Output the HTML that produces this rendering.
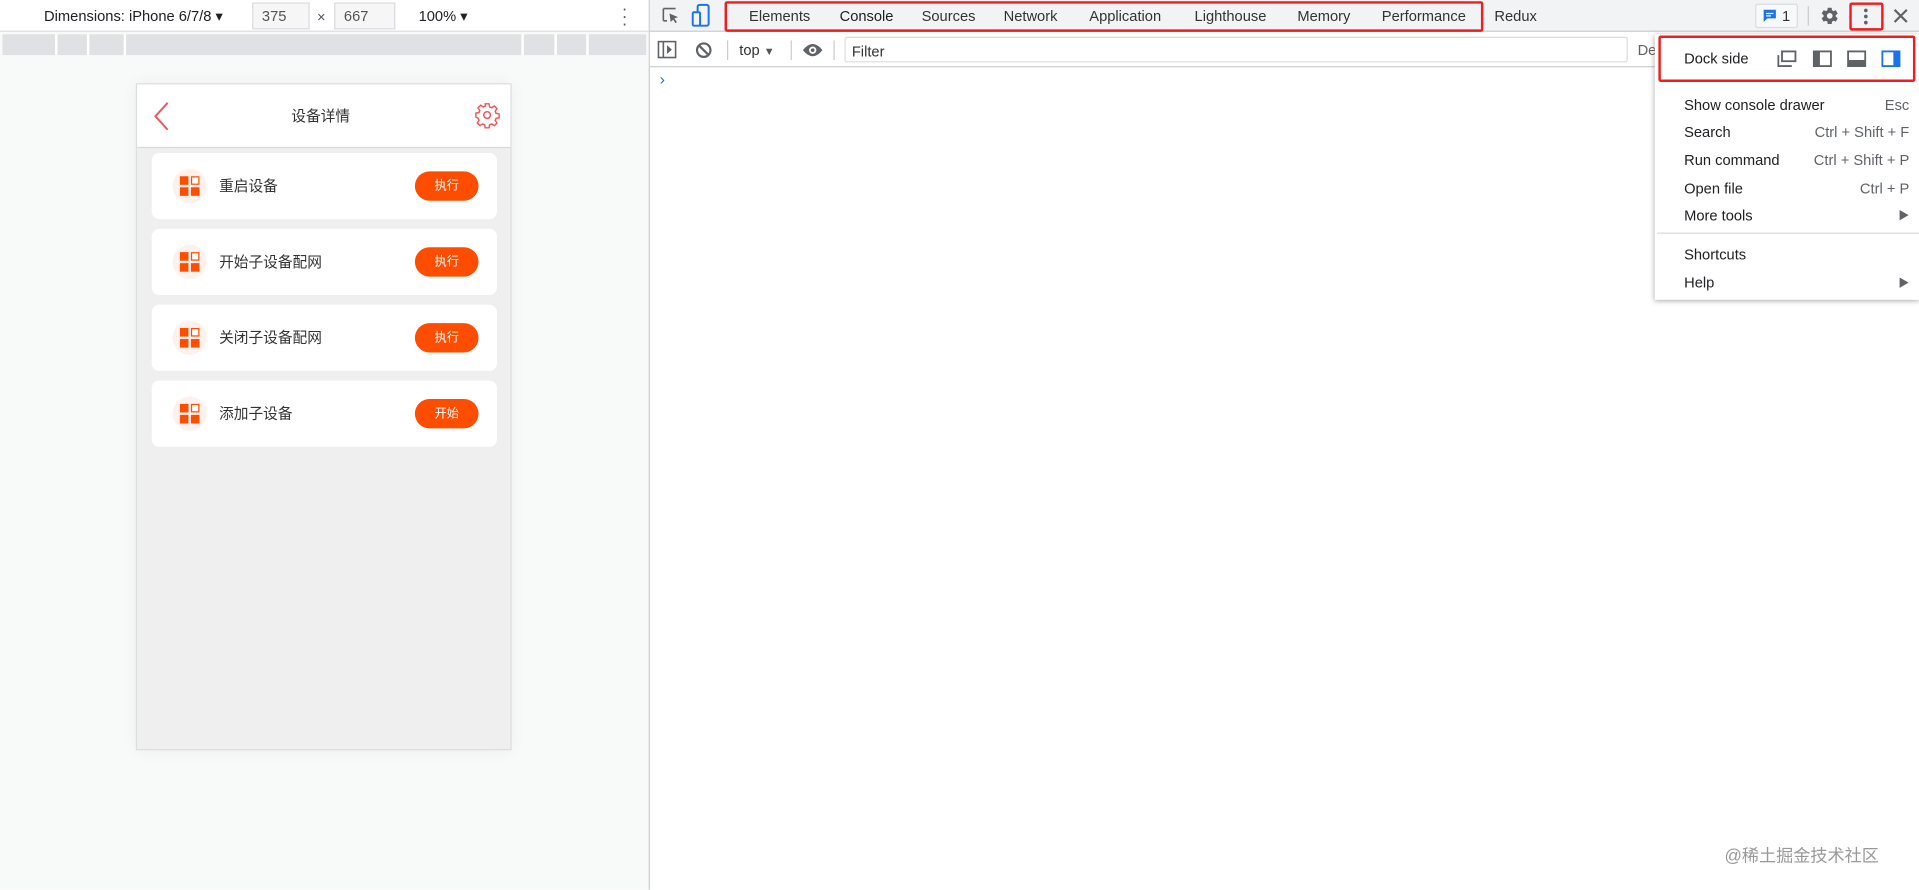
<!DOCTYPE html>
<html><head><meta charset="utf-8"><style>
*{box-sizing:border-box;margin:0;padding:0}
html,body{width:1919px;height:890px;overflow:hidden;background:#fff}
#s{position:absolute;left:0;top:0;width:1568px;height:727px;transform:scale(1.2239);transform-origin:0 0;font-family:"Liberation Sans","Noto Sans CJK SC",sans-serif;font-size:12px;color:#303942}
.a{position:absolute}
.left{left:0;top:0;width:530px;height:727px;background:#f8f9f9}
.card{position:absolute;left:12px;width:282px;height:54px;background:#fff;border-radius:6px}
.ic{position:absolute;left:17px;top:13px;width:28px;height:28px;border-radius:50%;background:#fdf1ee}
.ic i{position:absolute;width:7px;height:7px;background:#ff4d00}
.lbl{position:absolute;left:55px;top:18px;font-size:12px;color:#333}
.btn{position:absolute;left:215px;top:15px;width:52px;height:24px;border-radius:12px;background:#ff4d00;color:#fff;font-size:10px;text-align:center;line-height:25px}
.tab{position:absolute;top:6px;font-size:12px;color:#333}
.mi{position:absolute;left:24px;font-size:12px;color:#202124}
.sc{position:absolute;right:8px;font-size:12px;color:#5f6368}
</style></head><body><div id="s">
<div class="a left">
 <div class="a" style="left:0;top:0;width:530px;height:26px;background:#fff;border-bottom:1px solid #dadce0"></div>
 <div class="a" style="left:36px;top:6px;font-size:12px;color:#202124">Dimensions: iPhone 6/7/8 ▾</div>
 <div class="a" style="left:206px;top:2px;width:47px;height:22px;border:1px solid #dadce0;background:#f6f6f6;color:#555;padding:3px 0 0 7px">375</div>
 <div class="a" style="left:259px;top:7px;color:#555">×</div>
 <div class="a" style="left:273px;top:2px;width:50px;height:22px;border:1px solid #dadce0;background:#f6f6f6;color:#555;padding:3px 0 0 7px">667</div>
 <div class="a" style="left:342px;top:6px;font-size:12px;color:#202124">100% ▾</div>
 <div class="a" style="left:508px;top:4px;color:#555;font-size:14px;line-height:6px;text-align:center">·<br>·<br>·</div>
 <div class="a" style="left:2px;top:28px;width:526px;height:17px;background:#dfe1e5"></div>
 <div class="a" style="left:45px;top:28px;width:2px;height:17px;background:#fff"></div>
 <div class="a" style="left:71px;top:28px;width:2px;height:17px;background:#fff"></div>
 <div class="a" style="left:101px;top:28px;width:2px;height:17px;background:#fff"></div>
 <div class="a" style="left:426px;top:28px;width:2px;height:17px;background:#fff"></div>
 <div class="a" style="left:453px;top:28px;width:2px;height:17px;background:#fff"></div>
 <div class="a" style="left:479px;top:28px;width:2px;height:17px;background:#fff"></div>
 <div class="a" style="left:111px;top:68px;width:307px;height:545px;background:#efefef;border:1px solid #ddd;box-shadow:0 0 12px rgba(0,0,0,.05)">
  <div class="a" style="left:0;top:0;width:305px;height:52px;background:#fff;border-bottom:1px solid #d8d8d8"></div>
  <svg class="a" style="left:12px;top:13px" width="16" height="26"><path d="M13 2 L3 13 L13 24" stroke="#f25555" stroke-width="1.6" fill="none"/></svg>
  <div class="a" style="left:126px;top:17px;font-size:12px;color:#333">设备详情</div>
  <svg class="a" style="left:275px;top:14px" width="22" height="22" viewBox="0 0 24 24"><path d="M10.3 2h3.4l.5 2.7 1.9.8 2.3-1.6 2.4 2.4-1.6 2.3.8 1.9 2.7.5v3.4l-2.7.5-.8 1.9 1.6 2.3-2.4 2.4-2.3-1.6-1.9.8-.5 2.7h-3.4l-.5-2.7-1.9-.8-2.3 1.6-2.4-2.4 1.6-2.3-.8-1.9L2 13.7v-3.4l2.7-.5.8-1.9-1.6-2.3 2.4-2.4 2.3 1.6 1.9-.8z" fill="none" stroke="#f25555" stroke-width="1.3"/><circle cx="12" cy="12" r="3" fill="none" stroke="#f25555" stroke-width="1.3"/></svg>
  <div class="card" style="top:56px"><div class="ic"><i style="left:6px;top:6px"></i><i style="left:15px;top:6px;background:#fff;border:1.5px solid #ff4d00"></i><i style="left:6px;top:15px"></i><i style="left:15px;top:15px"></i></div><div class="lbl">重启设备</div><div class="btn">执行</div></div>
  <div class="card" style="top:118px"><div class="ic"><i style="left:6px;top:6px"></i><i style="left:15px;top:6px;background:#fff;border:1.5px solid #ff4d00"></i><i style="left:6px;top:15px"></i><i style="left:15px;top:15px"></i></div><div class="lbl">开始子设备配网</div><div class="btn">执行</div></div>
  <div class="card" style="top:180px"><div class="ic"><i style="left:6px;top:6px"></i><i style="left:15px;top:6px;background:#fff;border:1.5px solid #ff4d00"></i><i style="left:6px;top:15px"></i><i style="left:15px;top:15px"></i></div><div class="lbl">关闭子设备配网</div><div class="btn">执行</div></div>
  <div class="card" style="top:242px"><div class="ic"><i style="left:6px;top:6px"></i><i style="left:15px;top:6px;background:#fff;border:1.5px solid #ff4d00"></i><i style="left:6px;top:15px"></i><i style="left:15px;top:15px"></i></div><div class="lbl">添加子设备</div><div class="btn">开始</div></div>
 </div>
</div>
<div class="a" style="left:530px;top:0;width:1px;height:727px;background:#cbcdd1"></div>
<div class="a" style="left:531px;top:0;width:1037px;height:26px;background:#f1f3f4;border-bottom:1px solid #cbcdd1"></div>
<svg class="a" style="left:540px;top:5px" width="16" height="16"><path d="M2 2h10M2 2v10M2 12h3" stroke="#5f6368" stroke-width="1.3" fill="none"/><path d="M7 6l7 3-3 1 2 3-1 1-2-3-2 2z" fill="#5f6368"/></svg>
<svg class="a" style="left:565px;top:3px" width="16" height="20"><rect x="5" y="1" width="9" height="17" rx="1.5" stroke="#1a73e8" stroke-width="1.6" fill="none"/><rect x="1" y="7" width="6" height="11" rx="1" stroke="#1a73e8" stroke-width="1.6" fill="#f1f3f4"/></svg>
<div class="a" style="left:592px;top:1px;width:620px;height:25px;border:2px solid #f21c1c;border-radius:2px"></div>
<div class="tab" style="left:612px">Elements</div>
<div class="tab" style="left:686px;color:#202124">Console</div>
<div class="tab" style="left:753px">Sources</div>
<div class="tab" style="left:820px">Network</div>
<div class="tab" style="left:890px">Application</div>
<div class="tab" style="left:976px">Lighthouse</div>
<div class="tab" style="left:1060px">Memory</div>
<div class="tab" style="left:1129px">Performance</div>
<div class="tab" style="left:1221px">Redux</div>
<div class="a" style="left:1434px;top:3px;width:35px;height:20px;border:1px solid #dadce0;border-radius:2px;background:#f8f9fa"></div>
<svg class="a" style="left:1440px;top:7px" width="12" height="12"><path d="M1 1h10v7H4l-3 3z" fill="#1a73e8"/><path d="M3 4h6M3 6h4" stroke="#fff"/></svg>
<div class="a" style="left:1456px;top:6px;color:#333;font-size:12px">1</div>
<div class="a" style="left:1477px;top:5px;width:1px;height:16px;background:#ccc"></div>
<svg class="a" style="left:1487px;top:5px" width="16" height="16" viewBox="0 0 24 24"><path d="M19.4 13c.04-.3.06-.65.06-1s-.02-.7-.06-1l2.1-1.6c.2-.15.24-.42.12-.64l-2-3.46c-.12-.22-.4-.3-.6-.22l-2.5 1c-.52-.4-1.08-.73-1.700-.98L14.4 2.4A.5.5 0 0 0 14 2h-4a.5.5 0 0 0-.5.42L9.1 5.1c-.6.25-1.17.6-1.7.98l-2.5-1a.5.5 0 0 0-.6.22l-2 3.46c-.13.22-.07.49.12.64L4.5 11c-.04.3-.07.66-.07 1s.03.7.07 1l-2.1 1.6a.5.5 0 0 0-.12.64l2 3.46c.12.22.4.3.6.22l2.5-1c.52.4 1.08.73 1.7.98l.38 2.66c.04.24.25.42.5.42h4c.25 0 .46-.18.5-.42l.37-2.660c.6-.25 1.17-.58 1.7-.98l2.5 1c.22.08.48 0 .6-.22l2-3.46c.12-.22.07-.49-.12-.64zM12 15.5A3.5 3.5 0 1 1 12 8.5a3.5 3.5 0 0 1 0 7z" fill="#5f6368"/></svg>
<div class="a" style="left:1511px;top:2px;width:28px;height:23px;border:2px solid #f21c1c;border-radius:2px"></div>
<div class="a" style="left:1523px;top:7px;width:3px;height:3px;border-radius:50%;background:#5f6368;box-shadow:0 5px 0 #5f6368,0 10px 0 #5f6368"></div>
<svg class="a" style="left:1547px;top:7px" width="12" height="12"><path d="M1 1l10 10M11 1L1 11" stroke="#5f6368" stroke-width="1.8"/></svg>
<div class="a" style="left:531px;top:27px;width:1037px;height:28px;background:#fff;border-bottom:1px solid #cbcdd1"></div>
<svg class="a" style="left:537px;top:33px" width="16" height="15"><rect x="1" y="1" width="14" height="13" stroke="#5f6368" stroke-width="1.3" fill="none"/><path d="M5 1v13" stroke="#5f6368" stroke-width="1.3"/><path d="M8 4l4 3.5-4 3.5z" fill="#5f6368"/></svg>
<svg class="a" style="left:568px;top:34px" width="14" height="14"><circle cx="7" cy="7" r="5.5" stroke="#5f6368" stroke-width="1.8" fill="none"/><path d="M3 3l8 8" stroke="#5f6368" stroke-width="1.8"/></svg>
<div class="a" style="left:594px;top:33px;width:1px;height:16px;background:#ccc"></div>
<div class="a" style="left:604px;top:34px;color:#333;font-size:12px">top <span style="font-size:9px;color:#555">▼</span></div>
<div class="a" style="left:646px;top:33px;width:1px;height:16px;background:#ccc"></div>
<svg class="a" style="left:655px;top:34px" width="18" height="14"><path d="M1 7Q9 -3 17 7Q9 17 1 7z" fill="#5f6368"/><circle cx="9" cy="7" r="3" fill="#fff"/><circle cx="9" cy="7" r="1.5" fill="#5f6368"/></svg>
<div class="a" style="left:681px;top:33px;width:1px;height:16px;background:#ccc"></div>
<div class="a" style="left:690px;top:30px;width:640px;height:21px;border:1px solid #dadce0;border-radius:2px;padding:4px 0 0 5px;color:#333;font-size:12px">Filter</div>
<div class="a" style="left:1338px;top:34px;color:#5f6368;font-size:12px">De</div>
<div class="a" style="left:539px;top:57px;color:#1a73e8;font-size:13px">›</div>
<div class="a" style="left:1352px;top:28px;width:216px;height:217px;background:#fff;box-shadow:0 1px 4px rgba(0,0,0,.35)">
 <div class="a" style="left:3px;top:1px;width:210px;height:38px;border:2px solid #f21c1c;border-radius:2px"></div>
 <div class="mi" style="top:13px">Dock side</div>
 <svg class="a" style="left:100px;top:13px" width="16" height="14"><rect x="4" y="1" width="11" height="8" stroke="#5f6368" stroke-width="1.5" fill="#fff"/><path d="M1 4v9h11" stroke="#5f6368" stroke-width="1.5" fill="none"/></svg>
 <svg class="a" style="left:129px;top:13px" width="16" height="14"><rect x="1" y="1" width="14" height="12" stroke="#5f6368" stroke-width="1.5" fill="#fff"/><rect x="1" y="1" width="5" height="12" fill="#5f6368"/></svg>
 <svg class="a" style="left:157px;top:13px" width="16" height="14"><rect x="1" y="1" width="14" height="12" stroke="#5f6368" stroke-width="1.5" fill="#fff"/><rect x="1" y="8" width="14" height="5" fill="#5f6368"/></svg>
 <svg class="a" style="left:185px;top:13px" width="16" height="14"><rect x="1" y="1" width="14" height="12" stroke="#1a73e8" stroke-width="1.5" fill="#fff"/><rect x="10" y="1" width="5" height="12" fill="#1a73e8"/></svg>
 <div class="mi" style="top:51px">Show console drawer</div><div class="sc" style="top:51px">Esc</div>
 <div class="mi" style="top:73px">Search</div><div class="sc" style="top:73px">Ctrl + Shift + F</div>
 <div class="mi" style="top:96px">Run command</div><div class="sc" style="top:96px">Ctrl + Shift + P</div>
 <div class="mi" style="top:119px">Open file</div><div class="sc" style="top:119px">Ctrl + P</div>
 <div class="mi" style="top:141px">More tools</div><div class="sc" style="top:141px;font-size:9px">▶</div>
 <div class="a" style="left:2px;top:162px;width:214px;height:1px;background:#dadce0"></div>
 <div class="mi" style="top:173px">Shortcuts</div>
 <div class="mi" style="top:196px">Help</div><div class="sc" style="top:196px;font-size:9px">▶</div>
</div>
<div class="a" style="left:1409px;top:689px;color:#999;font-size:14px">@稀土掘金技术社区</div>
</div></body></html>
